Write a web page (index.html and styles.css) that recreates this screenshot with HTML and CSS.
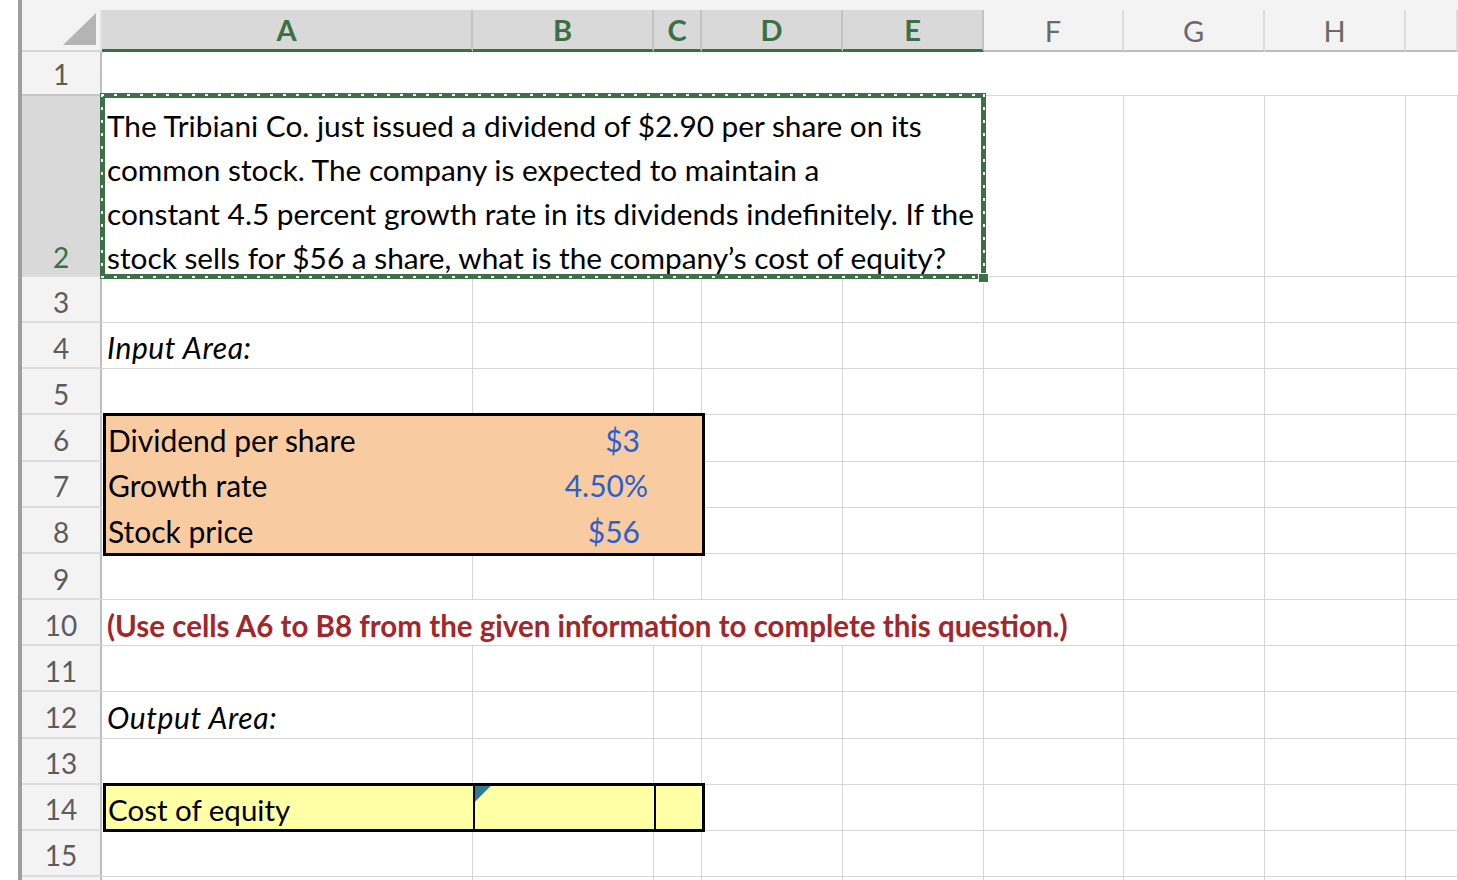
FILE: index.html
```html
<!DOCTYPE html>
<html lang="en">
<head>
<meta charset="utf-8">
<title>Cost of equity</title>
<link rel="stylesheet" href="styles.css">
</head>
<body>
<div class="app">
  <div class="gutter"></div>
  <div class="sheet">
    <div class="topstrip"></div>
    <div class="grid">
      <!-- column headers -->
      <div class="corner"><div class="tri"></div></div>
      <div class="ch on">A</div>
      <div class="ch on">B</div>
      <div class="ch on">C</div>
      <div class="ch on">D</div>
      <div class="ch on">E</div>
      <div class="ch">F</div>
      <div class="ch">G</div>
      <div class="ch">H</div>
      <div class="ch"></div>

      <!-- row 1 -->
      <div class="rh r1h">1</div>
      <div class="c r1"></div>

      <!-- row 2 -->
      <div class="rh on">2</div>
      <div class="c merged">
        <div class="wrap">The Tribiani Co. just issued a dividend of $2.90 per share on its<br>common stock. The company is expected to maintain a<br>constant 4.5 percent growth rate in its dividends indefinitely. If the<br>stock sells for $56 a share, what is the company’s cost of equity?</div>
        <span class="handle"></span>
      </div>
      <div class="c"></div><div class="c"></div><div class="c"></div><div class="c"></div>

      <!-- row 3 -->
      <div class="rh">3</div>
      <div class="c"></div><div class="c"></div><div class="c"></div><div class="c"></div><div class="c"></div><div class="c"></div><div class="c"></div><div class="c"></div><div class="c"></div>

      <!-- row 4 -->
      <div class="rh">4</div>
      <div class="c ital">Input Area:</div>
      <div class="c"></div><div class="c"></div><div class="c"></div><div class="c"></div><div class="c"></div><div class="c"></div><div class="c"></div><div class="c"></div>

      <!-- row 5 -->
      <div class="rh">5</div>
      <div class="c"></div><div class="c"></div><div class="c"></div><div class="c"></div><div class="c"></div><div class="c"></div><div class="c"></div><div class="c"></div><div class="c"></div>

      <!-- rows 6-8 : input box -->
      <div class="inbox">
        <div class="lbl">Dividend per share</div><div class="val">$3</div><div></div>
        <div class="lbl">Growth rate</div><div class="val pct">4.50%</div><div></div>
        <div class="lbl">Stock price</div><div class="val">$56</div><div></div>
      </div>
      <div class="rh">6</div>
      <div class="c"></div><div class="c"></div><div class="c"></div><div class="c"></div><div class="c"></div><div class="c"></div>
      <div class="rh">7</div>
      <div class="c"></div><div class="c"></div><div class="c"></div><div class="c"></div><div class="c"></div><div class="c"></div>
      <div class="rh">8</div>
      <div class="c"></div><div class="c"></div><div class="c"></div><div class="c"></div><div class="c"></div><div class="c"></div>

      <!-- row 9 -->
      <div class="rh">9</div>
      <div class="c"></div><div class="c"></div><div class="c"></div><div class="c"></div><div class="c"></div><div class="c"></div><div class="c"></div><div class="c"></div><div class="c"></div>

      <!-- row 10 -->
      <div class="rh">10</div>
      <div class="c red">(Use cells A6 to B8 from the given information to complete this question.)</div>
      <div class="c"></div><div class="c"></div><div class="c"></div>

      <!-- row 11 -->
      <div class="rh">11</div>
      <div class="c"></div><div class="c"></div><div class="c"></div><div class="c"></div><div class="c"></div><div class="c"></div><div class="c"></div><div class="c"></div><div class="c"></div>

      <!-- row 12 -->
      <div class="rh">12</div>
      <div class="c ital">Output Area:</div>
      <div class="c"></div><div class="c"></div><div class="c"></div><div class="c"></div><div class="c"></div><div class="c"></div><div class="c"></div><div class="c"></div>

      <!-- row 13 -->
      <div class="rh">13</div>
      <div class="c"></div><div class="c"></div><div class="c"></div><div class="c"></div><div class="c"></div><div class="c"></div><div class="c"></div><div class="c"></div><div class="c"></div>

      <!-- row 14 : output box -->
      <div class="outbox">
        <div class="lbl">Cost of equity</div>
        <div class="ob"><span class="flag"></span></div>
        <div class="ob"></div>
      </div>
      <div class="rh">14</div>
      <div class="c"></div><div class="c"></div><div class="c"></div><div class="c"></div><div class="c"></div><div class="c"></div>

      <!-- row 15 -->
      <div class="rh">15</div>
      <div class="c"></div><div class="c"></div><div class="c"></div><div class="c"></div><div class="c"></div><div class="c"></div><div class="c"></div><div class="c"></div><div class="c"></div>

      <!-- row 16 -->
      <div class="rh"></div>
      <div class="c"></div><div class="c"></div><div class="c"></div><div class="c"></div><div class="c"></div><div class="c"></div><div class="c"></div><div class="c"></div><div class="c"></div>
    </div>
  </div>
</div>
</body>
</html>
```

FILE: styles.css
```css
* { box-sizing: border-box; }

html, body {
  margin: 0;
  padding: 0;
  background: #ffffff;
}

body {
  font-family: "Lato", "Liberation Sans", sans-serif;
  overflow: hidden;
}

.app {
  display: flex;
  height: 880px;
  overflow: hidden;
}

.gutter {
  width: 18px;
  flex: none;
  background: #ffffff;
}

.sheet {
  flex: 1;
  min-width: 0;
  border-left: 4px solid #9e9e9e;
  display: flex;
  flex-direction: column;
}

.topstrip {
  height: 10px;
  flex: none;
  background: #f3f3f3;
}

.grid {
  display: grid;
  grid-template-columns: 80px 371px 181px 48px 141px 141px 140px 141px 141px 1fr;
  grid-template-rows: 42px 44px 181px repeat(14, 46.17px);
}

/* corner */
.corner {
  background: #f3f3f3;
  border-right: 2px solid #e2e2e2;
  border-bottom: 2px solid #d4d4d4;
  display: flex;
  justify-content: flex-end;
  align-items: flex-end;
  padding: 0 4px 5px 0;
}

.tri {
  width: 33px;
  height: 32px;
  background: #b4b4b4;
  clip-path: polygon(100% 0, 100% 100%, 0 100%);
}

/* column headers */
.ch {
  display: flex;
  align-items: center;
  justify-content: center;
  font-size: 29px;
  color: #6a6a6a;
  background: #f3f3f3;
  border-right: 2px solid #dcdcdc;
  border-bottom: 2px solid #bdbdbd;
}

.ch.on {
  background: #d9d9d9;
  color: #3a7045;
  font-weight: 700;
  border-right: 2px solid #c2c2c2;
  border-bottom: 3px solid #3a7045;
}

/* row headers */
.rh {
  background: #f3f3f3;
  border-right: 2px solid #bdbdbd;
  border-bottom: 2px solid #dcdcdc;
  display: flex;
  align-items: flex-end;
  justify-content: center;
  font-size: 28px;
  line-height: 1.2;
  color: #5c5c5c;
  padding-bottom: 2px;
}

.rh.r1h {
  border-bottom-color: #c6c6c6;
}

.rh.on {
  background: #d9d9d9;
  color: #3a7045;
  padding-bottom: 0;
}

/* body cells */
.c {
  border-right: 1px solid #d6d6d6;
  border-bottom: 1px solid #d6d6d6;
  display: flex;
  align-items: flex-end;
  padding: 0 5px 3px 5px;
  font-size: 30px;
  line-height: 1.2;
  color: #000000;
  white-space: nowrap;
  min-width: 0;
}

.c.r1 {
  grid-column: span 9;
  border-right: none;
}

.c.merged {
  grid-column: span 5;
  position: relative;
  z-index: 2;
  font-size: 29.8px;
  line-height: 44px;
  padding-bottom: 0;
}

.merged .wrap {
  margin-bottom: -4px;
}

.merged::after {
  content: "";
  position: absolute;
  top: -3px;
  left: -2px;
  right: -3px;
  bottom: -3px;
  border: 5px solid #3b7144;
  z-index: 1;
}

.merged::before {
  content: "";
  position: absolute;
  top: -2px;
  left: -1px;
  right: -2px;
  bottom: -2px;
  z-index: 2;
  background:
    repeating-linear-gradient(90deg, #ffffff 0 3px, transparent 3px 13px) top left / 100% 2px no-repeat,
    repeating-linear-gradient(90deg, #ffffff 0 3px, transparent 3px 13px) bottom left / 100% 2px no-repeat,
    repeating-linear-gradient(180deg, #ffffff 0 3px, transparent 3px 13px) top left / 2px 100% no-repeat,
    repeating-linear-gradient(180deg, #ffffff 0 3px, transparent 3px 13px) top right / 2px 100% no-repeat;
}

.handle {
  position: absolute;
  right: -6px;
  bottom: -7px;
  width: 11px;
  height: 10px;
  background: #3b7144;
  border: 1px solid #ffffff;
  z-index: 3;
}

.ital {
  font-style: italic;
  letter-spacing: 0.6px;
}

.c.red {
  grid-column: span 6;
  color: #a3262a;
  font-weight: 700;
  font-size: 29.5px;
  padding-bottom: 2px;
}

/* input box */
.inbox {
  grid-column: 2 / 5;
  grid-row: 7 / 10;
  margin: -2.5px -3px -2px 1px;
  border: 3px solid #000000;
  background: #f8cca0;
  position: relative;
  z-index: 1;
  display: grid;
  grid-template-columns: 367px 181px 1fr;
  grid-template-rows: repeat(3, 1fr);
}

.lbl,
.val {
  display: flex;
  align-items: flex-end;
  font-size: 30px;
  line-height: 1.2;
  white-space: nowrap;
  padding-bottom: 4px;
}

.lbl {
  padding-left: 2px;
  color: #000000;
}

.val {
  justify-content: flex-end;
  color: #2c5fd0;
  padding-right: 14px;
}

.val.pct {
  padding-right: 6px;
}

/* output box */
.outbox {
  grid-column: 2 / 5;
  grid-row: 15 / 16;
  margin: -2px -3px -1px 1px;
  border: 3px solid #000000;
  background: #ffffa6;
  position: relative;
  z-index: 1;
  display: grid;
  grid-template-columns: 367px 181px 1fr;
}

.outbox .lbl {
  padding-bottom: 1px;
  font-size: 29.5px;
}

.ob {
  border-left: 2px solid #000000;
  display: flex;
  align-items: flex-start;
}

.flag {
  width: 16px;
  height: 16px;
  background: linear-gradient(135deg, #2b7891 0%, #2f7b93 45%, #9fc3c9 75%, #ffffa6 100%);
  clip-path: polygon(0 0, 100% 0, 0 100%);
}
```
